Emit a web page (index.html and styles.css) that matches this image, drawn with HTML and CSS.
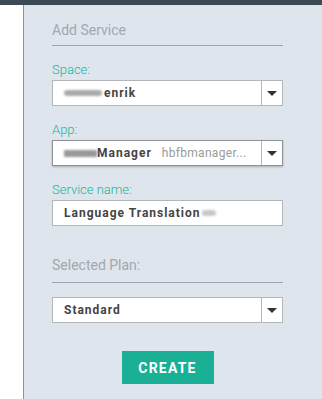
FILE: index.html
```html
<!DOCTYPE html>
<html lang="en">
<head>
    <meta charset="UTF-8">
    <meta name="viewport" content="width=device-width, initial-scale=1.0">
    <title>Add Service</title>
    <link rel="stylesheet" href="styles.css">
</head>
<body>
    <div class="topbar"></div>
    <div class="layout">
        <div class="gutter"></div>
        <div class="panel">
            <h2 class="section-title">Add Service</h2>

            <label class="field-label">Space:</label>
            <div class="select">
                <div class="select-value"><span class="blur blur-space"></span>enrik</div>
                <div class="select-arrow"></div>
            </div>

            <label class="field-label">App:</label>
            <div class="select focused">
                <div class="select-value"><span class="blur blur-app"></span>Manager<span class="muted">hbfbmanager...</span></div>
                <div class="select-arrow"></div>
            </div>

            <label class="field-label">Service name:</label>
            <div class="input">Language Translation<span class="blur blur-name"></span></div>

            <h2 class="section-title plan">Selected Plan:</h2>

            <div class="select">
                <div class="select-value">Standard</div>
                <div class="select-arrow"></div>
            </div>

            <div class="actions">
                <button class="create">CREATE</button>
            </div>
        </div>
    </div>
</body>
</html>
```

FILE: styles.css
```css
body {
    margin: 0;
    background-color: #fff;
    font-family: Roboto, "Liberation Sans", sans-serif;
    height: 399px;
    overflow: hidden;
}

.topbar {
    height: 5px;
    background-color: #3c4a55;
}

.layout {
    display: flex;
    height: 394px;
}

.gutter {
    width: 23px;
    background-color: #fff;
}

.panel {
    flex: 1;
    background-color: #dfe5ec;
    border-left: 1px solid #8e9398;
    padding: 0 39px 0 28px;
}

.section-title {
    margin: 16px 0 0;
    padding-bottom: 6px;
    font-size: 14px;
    font-weight: normal;
    color: #a1a8b0;
    border-bottom: 1px solid #9ea4aa;
    line-height: 18px;
}

.section-title.plan {
    margin-top: 30px;
    margin-bottom: 14px;
    padding-bottom: 8px;
}

.field-label {
    display: block;
    margin: 17px 0 3px;
    font-size: 13px;
    font-weight: 300;
    color: #20b39a;
    line-height: 14px;
}

.select,
.input {
    display: flex;
    height: 24px;
    background-color: #fff;
    border: 1px solid #b2b6ba;
    font-size: 12px;
    font-weight: bold;
    letter-spacing: 1px;
    color: #444;
}

.select.focused {
    border-color: #8f9398;
    box-shadow: 0 1px 2px rgba(0, 0, 0, 0.25);
}

.select-value {
    flex: 1;
    display: flex;
    align-items: center;
    padding-left: 11px;
    white-space: nowrap;
    overflow: hidden;
}

.input {
    align-items: center;
    padding-left: 11px;
}

.select-arrow {
    width: 20px;
    border-left: 1px solid #b2b6ba;
    position: relative;
}

.select-arrow::after {
    content: "";
    position: absolute;
    left: 5px;
    top: 10px;
    border-left: 5px solid transparent;
    border-right: 5px solid transparent;
    border-top: 5px solid #333;
}

.muted {
    margin-left: 10px;
    font-weight: normal;
    letter-spacing: 0.3px;
    color: #9a9a9a;
}

.blur {
    display: inline-block;
    height: 6px;
    border-radius: 3px;
    background-color: #aaa;
    filter: blur(1.2px);
}

.blur-space {
    width: 38px;
    margin-right: 2px;
}

.blur-app {
    width: 33px;
    height: 7px;
    border-radius: 1px;
    background-color: #999;
}

.blur-name {
    width: 14px;
    margin-left: 1px;
    background-color: #c8c8c8;
}

.actions {
    display: flex;
    justify-content: center;
    margin-top: 28px;
}

.create {
    width: 92px;
    height: 33px;
    border: none;
    background-color: #19b095;
    color: #fff;
    font-family: Roboto, "Liberation Sans", sans-serif;
    font-size: 14px;
    font-weight: bold;
    letter-spacing: 1.2px;
    cursor: pointer;
}
```
